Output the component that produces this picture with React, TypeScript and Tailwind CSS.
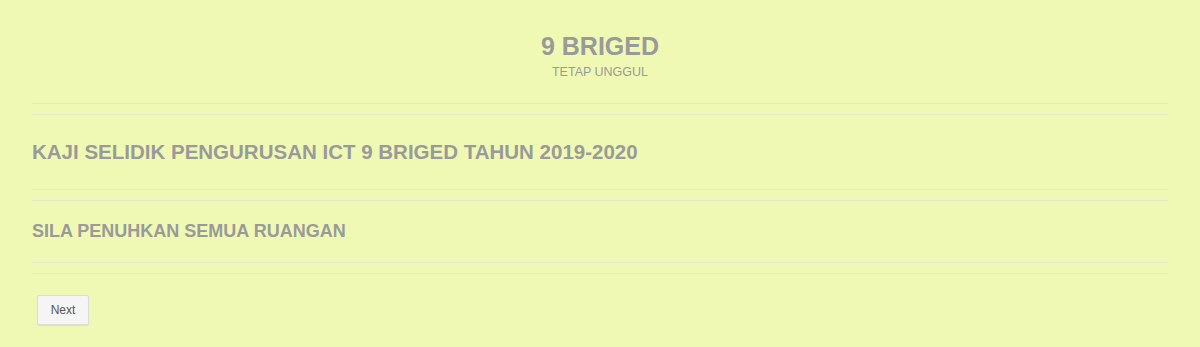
export default function App() {
  return (
    <div className="min-h-[347px] w-full bg-[#eff9b3] px-8 pt-[31px] font-['Liberation_Sans',Arial,sans-serif] text-[#9a9a9a]">
      <div className="flex flex-col items-center">
        <h1 className="text-[25px] font-bold leading-[30px]">9 BRIGED</h1>
        <p className="mt-[4px] text-[12.5px] leading-[14px]">TETAP UNGGUL</p>
      </div>

      <div className="mt-[24px] h-[12px] border-y border-[#e5e9cc]" />

      <div className="flex h-[74px] items-center">
        <h2 className="text-[20.5px] font-bold">KAJI SELIDIK PENGURUSAN ICT 9 BRIGED TAHUN 2019-2020</h2>
      </div>

      <div className="h-[12px] border-y border-[#e5e9cc]" />

      <div className="flex h-[61px] items-center">
        <h3 className="text-[18px] font-bold">SILA PENUHKAN SEMUA RUANGAN</h3>
      </div>

      <div className="h-[12px] border-y border-[#e5e9cc]" />

      <div className="pt-[21px] pl-[5px]">
        <button className="h-[30px] w-[52px] rounded-[2px] border border-[#dcdcdc] bg-[#f5f5f5] text-[12px] text-[#555555] shadow-[0_1px_1px_rgba(0,0,0,0.08)]">
          Next
        </button>
      </div>
    </div>
  );
}
